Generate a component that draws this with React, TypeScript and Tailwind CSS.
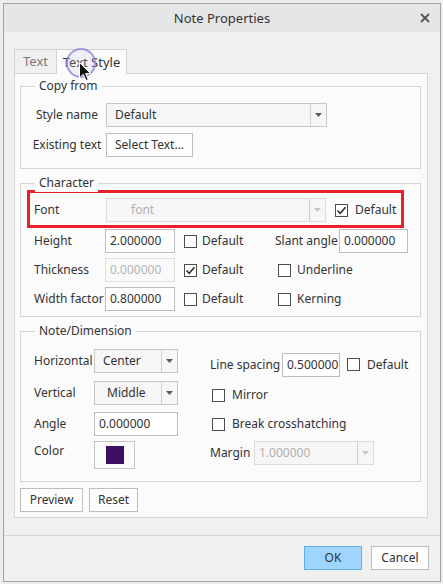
import React from 'react'

function Checkbox({ checked }: { checked?: boolean }) {
  return (
    <div className="w-[13px] h-[13px] shrink-0 border border-[#4d4d4d] bg-white flex items-center justify-center">
      {checked && (
        <svg width="11" height="11" viewBox="0 0 11 11">
          <path d="M1.5 5.5 L4.2 8.3 L9.5 2.2" fill="none" stroke="#2b2b2b" strokeWidth="1.5" />
        </svg>
      )}
    </div>
  )
}

function Arrow({ disabled }: { disabled?: boolean }) {
  return (
    <div className="w-[16px] h-full border-l border-[#cfcfcf] flex items-center justify-center">
      <svg width="7" height="4" viewBox="0 0 7 4">
        <path d="M0 0 L7 0 L3.5 4 Z" fill={disabled ? '#c4c4c4' : '#5a5a5a'} />
      </svg>
    </div>
  )
}

function Select({ value, width, disabled, indent = 'pl-[8px]' }: { value: string; width: string; disabled?: boolean; indent?: string }) {
  return (
    <div className={`${width} h-[24px] shrink-0 flex border ${disabled ? 'border-[#dcdcdc] bg-[#f6f6f6]' : 'border-[#c6c6c6] bg-[#f6f6f6]'}`}>
      <div className={`flex-1 flex items-center ${indent} ${disabled ? 'text-[#b0b0b0]' : 'text-[#333]'}`}>{value}</div>
      <Arrow disabled={disabled} />
    </div>
  )
}

function Input({ value, width, disabled }: { value: string; width: string; disabled?: boolean }) {
  return (
    <div className={`${width} h-[24px] shrink-0 flex items-center pl-[4px] border ${disabled ? 'border-[#dedede] bg-[#fafafa] text-[#b4b4b4]' : 'border-[#bdbdbd] bg-white text-[#333]'}`}>
      {value}
    </div>
  )
}

function Button({ label, width, primary }: { label: string; width: string; primary?: boolean }) {
  return (
    <div className={`${width} h-[24px] shrink-0 flex items-center justify-center border ${primary ? 'border-[#5fb0ee] bg-[#9fd4fd]' : 'border-[#bdbdbd] bg-[#fdfdfd]'} text-[#333]`}>
      {label}
    </div>
  )
}

function Group({ title, className, children }: { title: string; className?: string; children: React.ReactNode }) {
  return (
    <div className={`relative w-[401px] border border-[#d6d6d6] ${className ?? ''}`}>
      <span className="absolute -top-[10px] left-[14px] px-[4px] bg-[#fbfbfb] leading-[18px] text-[#333]">{title}</span>
      {children}
    </div>
  )
}

function Label({ text, width }: { text: string; width: string }) {
  return <div className={`${width} shrink-0 text-[#333] whitespace-nowrap`}>{text}</div>
}

export default function App() {
  return (
    <div className="w-[443px] h-[584px] bg-[#ececec] pt-[3px] pl-[3px] font-['Noto_Sans',sans-serif] text-[12px] leading-none relative overflow-hidden">
      <div className="w-[438px] h-[579px] border border-[#a3a3a3] bg-[#f0f0f0] flex flex-col">
        {/* Title bar */}
        <div className="h-[28px] shrink-0 bg-[#e5e6e8] relative flex items-center justify-center text-[13px] text-[#333]">
          Note Properties
          <svg className="absolute right-[10px] top-[9px]" width="10" height="10" viewBox="0 0 10 10">
            <path d="M1 1 L9 9 M9 1 L1 9" stroke="#555" strokeWidth="1.8" />
          </svg>
        </div>

        {/* Body */}
        <div className="pl-[10px] pr-[11px] pt-[17px]">
          {/* Tabs */}
          <div className="flex items-end h-[24px]">
            <div className="w-[43px] h-[24px] border border-[#d3d3d3] border-b-0 bg-[#f0f0f0] flex items-center justify-center text-[13px] text-[#7a7a7a]">
              Text
            </div>
            <div className="w-[71px] h-[25px] -mb-px -ml-px border border-[#d3d3d3] border-b-0 bg-[#fbfbfb] flex items-center justify-center text-[13px] text-[#333] relative z-10">
              Text Style
            </div>
          </div>

          {/* Panel */}
          <div className="w-[414px] h-[445px] border border-[#d6d6d6] bg-[#fbfbfb] pl-[5px] pt-[12px]">
            <Group title="Copy from" className="h-[83px] pt-[16px] pl-[11px]">
              <div className="flex items-center h-[24px]">
                <div className="w-[70px] text-center text-[#333] whitespace-nowrap">Style name</div>
                <div className="ml-[4px]">
                  <Select value="Default" width="w-[221px]" />
                </div>
              </div>
              <div className="flex items-center h-[23px] mt-[6px]">
                <div className="w-[70px] text-center text-[#333] whitespace-nowrap">Existing text</div>
                <div className="ml-[4px]">
                  <Button label="Select Text..." width="w-[87px]" />
                </div>
              </div>
            </Group>

            <Group title="Character" className="mt-[14px] pt-[6px] pb-[5px]">
              <div className="ml-[6px] w-[377px] h-[38px] border-[3px] border-[#e8212b] flex items-center pl-[4px] pt-[2px]">
                <Label text="Font" width="w-[72px]" />
                <Select value="font" width="w-[220px]" disabled indent="pl-[24px]" />
                <div className="ml-[9px]"><Checkbox checked /></div>
                <span className="ml-[7px] text-[#333]">Default</span>
              </div>

              <div className="pl-[13px] pt-[1px] flex flex-col gap-[5px]">
                <div className="flex items-center h-[24px]">
                  <Label text="Height" width="w-[71px]" />
                  <Input value="2.000000" width="w-[70px]" />
                  <div className="ml-[9px]"><Checkbox /></div>
                  <span className="ml-[5px] w-[73px] text-[#333]">Default</span>
                  <span className="w-[60px] text-[#333] whitespace-nowrap">Slant angle</span>
                  <div className="ml-[4px]"><Input value="0.000000" width="w-[69px]" /></div>
                </div>
                <div className="flex items-center h-[24px]">
                  <Label text="Thickness" width="w-[71px]" />
                  <Input value="0.000000" width="w-[70px]" disabled />
                  <div className="ml-[9px]"><Checkbox checked /></div>
                  <span className="ml-[5px] w-[73px] text-[#333]">Default</span>
                  <div className="ml-[3px]"><Checkbox /></div>
                  <span className="ml-[6px] text-[#333]">Underline</span>
                </div>
                <div className="flex items-center h-[24px]">
                  <Label text="Width factor" width="w-[71px]" />
                  <Input value="0.800000" width="w-[70px]" />
                  <div className="ml-[9px]"><Checkbox /></div>
                  <span className="ml-[5px] w-[73px] text-[#333]">Default</span>
                  <div className="ml-[3px]"><Checkbox /></div>
                  <span className="ml-[6px] text-[#333]">Kerning</span>
                </div>
              </div>
            </Group>

            <Group title="Note/Dimension" className="mt-[14px] h-[151px] pl-[13px] flex">
              {/* left column */}
              <div className="pt-[17px] flex flex-col w-[144px]">
                <div className="flex items-center h-[23px]">
                  <Label text="Horizontal" width="w-[60px]" />
                  <Select value="Center" width="w-[84px]" />
                </div>
                <div className="flex items-center h-[24px] mt-[9px]">
                  <Label text="Vertical" width="w-[60px]" />
                  <Select value="Middle" width="w-[84px]" indent="pl-[12px]" />
                </div>
                <div className="flex items-center h-[24px] mt-[7px]">
                  <Label text="Angle" width="w-[60px]" />
                  <Input value="0.000000" width="w-[84px]" />
                </div>
                <div className="flex items-start h-[28px] mt-[5px]">
                  <div className="w-[60px] pt-[4px] text-[#333]">Color</div>
                  <div className="w-[41px] h-[28px] border border-[#c4c4c4] bg-[#fbfbfb] flex items-center justify-center">
                    <div className="w-[18px] h-[18px] bg-[#3b1062]" />
                  </div>
                </div>
              </div>

              {/* right column */}
              <div className="ml-[32px] pt-[21px] flex flex-col">
                <div className="flex items-center h-[23px]">
                  <span className="w-[72px] text-[#333] whitespace-nowrap">Line spacing</span>
                  <Input value="0.500000" width="w-[58px]" />
                  <div className="ml-[7px]"><Checkbox /></div>
                  <span className="ml-[7px] text-[#333]">Default</span>
                </div>
                <div className="flex items-center h-[24px] mt-[7px] pl-[2px]">
                  <Checkbox />
                  <span className="ml-[7px] text-[#333]">Mirror</span>
                </div>
                <div className="flex items-center h-[24px] mt-[5px] pl-[2px]">
                  <Checkbox />
                  <span className="ml-[7px] text-[#333]">Break crosshatching</span>
                </div>
                <div className="flex items-center h-[24px] mt-[5px]">
                  <span className="w-[44px] text-[#333]">Margin</span>
                  <Select value="1.000000" width="w-[120px]" disabled indent="pl-[4px]" />
                </div>
              </div>
            </Group>

            <div className="flex gap-[6px] mt-[6px]">
              <Button label="Preview" width="w-[63px]" />
              <Button label="Reset" width="w-[49px]" />
            </div>
          </div>
        </div>

        {/* Footer */}
        <div className="mt-[17px] border-t border-[#d5d5d5] flex justify-end gap-[9px] pr-[11px] pt-[10px]">
          <Button label="OK" width="w-[58px]" primary />
          <Button label="Cancel" width="w-[58px]" />
        </div>
      </div>

      {/* click highlight + cursor */}
      <div className="absolute left-[66px] top-[48px] w-[30px] h-[30px] rounded-full border-[2.5px] border-[#8d86d9]/80 bg-[#c9c2f0]/20 z-20" />
      <svg className="absolute left-[79px] top-[62px] z-30" width="13" height="20" viewBox="0 0 13 20">
        <path d="M0.5 0.5 L0.5 16 L4.3 12.4 L7 18.6 L9.2 17.6 L6.6 11.6 L11.6 11.6 Z" fill="#111" stroke="#fff" strokeWidth="1" />
      </svg>
    </div>
  )
}
